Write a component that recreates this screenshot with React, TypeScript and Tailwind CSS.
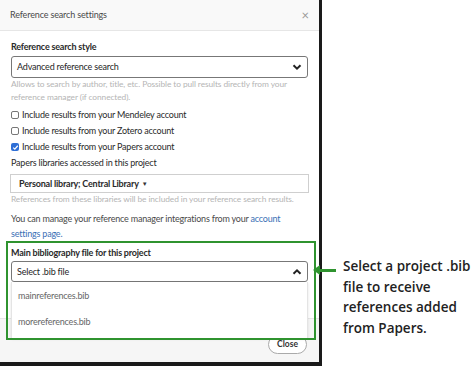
import React from "react";

function ChevronDown() {
  return (
    <svg viewBox="0 0 10 10" className="w-[10px] h-[10px]">
      <path d="M1.5 3.2 L5 6.6 L8.5 3.2" fill="none" stroke="#222" strokeWidth="2" />
    </svg>
  );
}

function ChevronUp() {
  return (
    <svg viewBox="0 0 10 10" className="w-[10px] h-[10px]">
      <path d="M1.5 6.8 L5 3.4 L8.5 6.8" fill="none" stroke="#222" strokeWidth="2" />
    </svg>
  );
}

function CheckRow({ label, checked }: { label: string; checked?: boolean }) {
  return (
    <label className="flex items-center h-[16px] gap-[3px]">
      {checked ? (
        <span className="w-[8px] h-[8px] rounded-[2px] bg-[#2f6fd6] flex items-center justify-center">
          <svg viewBox="0 0 8 8" className="w-[7px] h-[7px]">
            <path d="M1.4 4.2 L3.2 5.9 L6.6 2" fill="none" stroke="#fff" strokeWidth="1.4" />
          </svg>
        </span>
      ) : (
        <span className="w-[8px] h-[8px] rounded-[2px] border border-[#777] bg-white" />
      )}
      <span className="text-[#2a2a2a]">{label}</span>
    </label>
  );
}

export default function App() {
  return (
    <div className="w-[474px] h-[366px] bg-white flex overflow-hidden font-['Lato',sans-serif]">
      <div className="relative w-[322px] h-[366px] shrink-0 border-r-[3px] border-b-4 border-[#1a1a1a] bg-white flex flex-col">
        <div className="h-[31px] shrink-0 bg-[#f9f9f9] border-b border-[#e6e6e6] flex items-center justify-between pl-[10px] pr-[10px]">
          <span className="text-[9px] tracking-[-0.15px] text-[#4a4a4a]">Reference search settings</span>
          <span className="text-[13px] text-[#999] leading-none">×</span>
        </div>

        <div className="flex-1 px-[11px] pt-[8px] text-[9px] tracking-[-0.2px]">
          <div className="h-[16px] leading-[16px] font-bold text-[#2a2a2a]">Reference search style</div>
          <div className="mt-px h-[22px] border border-[#777] rounded-[3px] flex items-center justify-between px-[5px]">
            <span className="text-[#1f1f1f]">Advanced reference search</span>
            <ChevronDown />
          </div>
          <p className="text-[8.4px] tracking-[-0.1px] leading-[13px] text-[#b5b5b5]">
            Allows to search by author, title, etc. Possible to pull results directly from your reference manager (if connected).
          </p>

          <div className="mt-[3px]">
            <CheckRow label="Include results from your Mendeley account" />
            <CheckRow label="Include results from your Zotero account" />
            <CheckRow label="Include results from your Papers account" checked />
          </div>

          <div className="h-[16px] leading-[16px] text-[#2a2a2a]">Papers libraries accessed in this project</div>
          <div className="mt-[3px] -mx-px h-[19px] border border-[#cfcfcf] flex items-center px-[8px]">
            <span className="font-bold text-[#2a2a2a]">Personal library; Central Library</span>
            <span className="ml-[3px] text-[6px] text-[#333]">▼</span>
          </div>
          <p className="text-[8.4px] tracking-[-0.1px] leading-[13px] text-[#b5b5b5]">
            References from these libraries will be included in your reference search results.
          </p>

          <p className="mt-[5px] leading-[15px] text-[#4a4a4a]">
            You can manage your reference manager integrations from your{" "}
            <span className="text-[#3a6fb5]">account</span>
            <br />
            <span className="text-[#3a6fb5]">settings page.</span>
          </p>

          <div className="relative mt-[4px]">
            <div className="h-[16px] leading-[16px] font-bold text-[#2a2a2a]">Main bibliography file for this project</div>
            <div className="relative z-10 h-[21px] border border-[#777] rounded-[3px] bg-white flex items-center justify-between px-[5px]">
              <span className="text-[#1f1f1f]">Select .bib file</span>
              <ChevronUp />
            </div>
            <div className="absolute left-0 right-0 top-[37px] z-20 h-[56px] bg-white border-x border-[#e4e4e4] shadow-sm">
              <div className="h-[26px] mt-px flex items-center px-[6px] text-[#666]">mainreferences.bib</div>
              <div className="h-[26px] flex items-center px-[6px] text-[#666]">morereferences.bib</div>
            </div>
          </div>
        </div>

        <div className="h-[44px] shrink-0 bg-[#f6f6f6] border-t border-[#e6e6e6] flex items-center justify-end pr-[12px] pt-[8px]">
          <button className="h-[19px] w-[39px] rounded-full border border-[#aaa] bg-white text-[8.5px] font-bold text-[#333]">
            Close
          </button>
        </div>

        <div className="absolute left-[6px] top-[241px] w-[310px] h-[99px] border-2 border-[#2f932f] z-30 pointer-events-none" />
      </div>

      <div className="relative flex-1 flex items-start pt-[256px] pl-[21px]">
        <div className="absolute left-[-8px] top-[269px] w-[22px] h-[3px] bg-[#2f932f]" />
        <div className="absolute left-[-9px] top-[265px] w-0 h-0 border-y-[5.5px] border-y-transparent border-r-[7px] border-r-[#2f932f]" />
        <p className="font-['Open_Sans',sans-serif] font-semibold text-[13.5px] leading-[20.5px] text-[#222]">
          Select a project .bib
          <br />
          file to receive
          <br />
          references added
          <br />
          from Papers.
        </p>
      </div>
    </div>
  );
}
